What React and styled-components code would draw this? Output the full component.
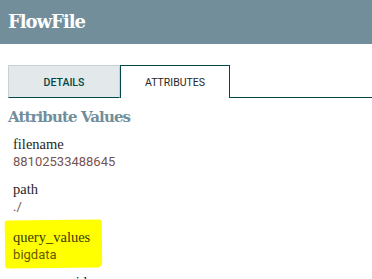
import React from 'react';
import styled, { createGlobalStyle } from 'styled-components';

const Global = createGlobalStyle`
  body {
    margin: 0;
    background: #ffffff;
    overflow: hidden;
  }
`;

const Page = styled.div`
  width: 372px;
  height: 279px;
  overflow: hidden;
  background: #ffffff;
`;

const Header = styled.div`
  height: 44px;
  background: #728e9b;
  display: flex;
  align-items: center;
  padding: 0 8px 2px;
  box-sizing: border-box;
`;

const Title = styled.h1`
  margin: 0;
  font-family: 'DejaVu Serif', serif;
  font-weight: bold;
  font-size: 18px;
  letter-spacing: -1px;
  color: #ffffff;
`;

const TabBar = styled.div`
  display: flex;
  height: 33px;
  margin-top: 21px;
  padding-left: 8px;
`;

const Tab = styled.div`
  width: ${(p) => (p.$active ? '110px' : '112px')};
  box-sizing: border-box;
  display: flex;
  align-items: center;
  justify-content: center;
  font-family: Roboto, 'Liberation Sans', sans-serif;
  font-size: 10.5px;
  font-weight: ${(p) => (p.$active ? 400 : 500)};
  color: ${(p) => (p.$active ? '#262626' : '#004849')};
  background: ${(p) => (p.$active ? '#ffffff' : '#e3e8eb')};
  border: 1px solid ${(p) => (p.$active ? '#004849' : '#c7d2d7')};
  border-bottom: ${(p) => (p.$active ? 'none' : '1px solid #004849')};
  padding-top: 1px;
`;

const TabFill = styled.div`
  flex: 1;
  border-bottom: 1px solid #004849;
`;

const Content = styled.div`
  padding: 9px 8px 0;
`;

const Section = styled.h2`
  margin: 0 0 9px;
  font-family: 'DejaVu Serif', serif;
  font-weight: bold;
  font-size: 15px;
  line-height: 20px;
  letter-spacing: -0.9px;
  color: #728e9b;
`;

const List = styled.div`
  display: flex;
  flex-direction: column;
  gap: 11px;
`;

const Item = styled.div`
  box-sizing: border-box;
  padding: ${(p) => (p.$marked ? '9px 0 5px 8px' : '0 0 0 5px')};
  margin: ${(p) => (p.$marked ? '-6px 0 -5px -3px' : '0')};
  width: ${(p) => (p.$marked ? '97px' : 'auto')};
  background: ${(p) => (p.$marked ? '#ffff00' : 'transparent')};
  border-radius: ${(p) => (p.$marked ? '3px 2px 4px 2px / 2px 4px 6px 3px' : '0')};
  transform: ${(p) => (p.$marked ? 'rotate(-0.6deg)' : 'none')};
`;

const Name = styled.div`
  font-family: 'Liberation Serif', serif;
  font-size: 14.5px;
  line-height: 17px;
  color: ${(p) => (p.$marked ? '#3b3a00' : '#262626')};
  transform: ${(p) => (p.$marked ? 'rotate(0.6deg)' : 'none')};
`;

const Value = styled.div`
  font-family: Roboto, 'Liberation Sans', sans-serif;
  font-size: 13px;
  line-height: 17px;
  color: ${(p) => (p.$marked ? '#6b5a00' : '#775351')};
  transform: ${(p) => (p.$marked ? 'rotate(0.6deg)' : 'none')};
`;

const attributes = [
  { name: 'filename', value: '88102533488645' },
  { name: 'path', value: './' },
  { name: 'query_values', value: 'bigdata', marked: true },
  { name: 'processor_id', value: '' },
];

export default function App() {
  return (
    <Page>
      <Global />
      <Header>
        <Title>FlowFile</Title>
      </Header>
      <TabBar>
        <Tab>DETAILS</Tab>
        <Tab $active>ATTRIBUTES</Tab>
        <TabFill />
      </TabBar>
      <Content>
        <Section>Attribute Values</Section>
        <List>
          {attributes.map((a) => (
            <Item key={a.name} $marked={a.marked}>
              <Name $marked={a.marked}>{a.name}</Name>
              <Value $marked={a.marked}>{a.value}</Value>
            </Item>
          ))}
        </List>
      </Content>
    </Page>
  );
}
